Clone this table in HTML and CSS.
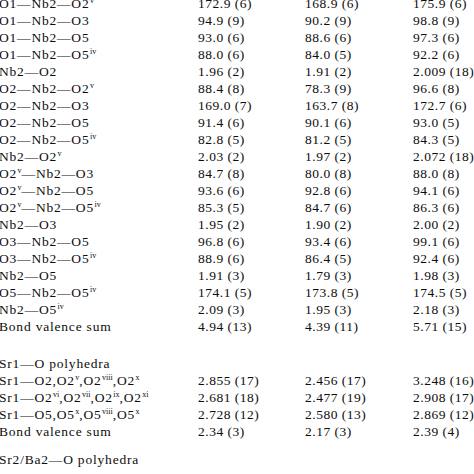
FILE: index.html
```html
<!DOCTYPE html>
<html>
<head>
<meta charset="utf-8">
<link rel="stylesheet" href="styles.css">
</head>
<body>
<div class="table">
  <div class="row"><span>O1—Nb2—O2<sup>v</sup></span><span>172.9 (6)</span><span>168.9 (6)</span><span>175.9 (6)</span></div>
  <div class="row"><span>O1—Nb2—O3</span><span>94.9 (9)</span><span>90.2 (9)</span><span>98.8 (9)</span></div>
  <div class="row"><span>O1—Nb2—O5</span><span>93.0 (6)</span><span>88.6 (6)</span><span>97.3 (6)</span></div>
  <div class="row"><span>O1—Nb2—O5<sup>iv</sup></span><span>88.0 (6)</span><span>84.0 (5)</span><span>92.2 (6)</span></div>
  <div class="row"><span>Nb2—O2</span><span>1.96 (2)</span><span>1.91 (2)</span><span>2.009 (18)</span></div>
  <div class="row"><span>O2—Nb2—O2<sup>v</sup></span><span>88.4 (8)</span><span>78.3 (9)</span><span>96.6 (8)</span></div>
  <div class="row"><span>O2—Nb2—O3</span><span>169.0 (7)</span><span>163.7 (8)</span><span>172.7 (6)</span></div>
  <div class="row"><span>O2—Nb2—O5</span><span>91.4 (6)</span><span>90.1 (6)</span><span>93.0 (5)</span></div>
  <div class="row"><span>O2—Nb2—O5<sup>iv</sup></span><span>82.8 (5)</span><span>81.2 (5)</span><span>84.3 (5)</span></div>
  <div class="row"><span>Nb2—O2<sup>v</sup></span><span>2.03 (2)</span><span>1.97 (2)</span><span>2.072 (18)</span></div>
  <div class="row"><span>O2<sup>v</sup>—Nb2—O3</span><span>84.7 (8)</span><span>80.0 (8)</span><span>88.0 (8)</span></div>
  <div class="row"><span>O2<sup>v</sup>—Nb2—O5</span><span>93.6 (6)</span><span>92.8 (6)</span><span>94.1 (6)</span></div>
  <div class="row"><span>O2<sup>v</sup>—Nb2—O5<sup>iv</sup></span><span>85.3 (5)</span><span>84.7 (6)</span><span>86.3 (6)</span></div>
  <div class="row"><span>Nb2—O3</span><span>1.95 (2)</span><span>1.90 (2)</span><span>2.00 (2)</span></div>
  <div class="row"><span>O3—Nb2—O5</span><span>96.8 (6)</span><span>93.4 (6)</span><span>99.1 (6)</span></div>
  <div class="row"><span>O3—Nb2—O5<sup>iv</sup></span><span>88.9 (6)</span><span>86.4 (5)</span><span>92.4 (6)</span></div>
  <div class="row"><span>Nb2—O5</span><span>1.91 (3)</span><span>1.79 (3)</span><span>1.98 (3)</span></div>
  <div class="row"><span>O5—Nb2—O5<sup>iv</sup></span><span>174.1 (5)</span><span>173.8 (5)</span><span>174.5 (5)</span></div>
  <div class="row"><span>Nb2—O5<sup>iv</sup></span><span>2.09 (3)</span><span>1.95 (3)</span><span>2.18 (3)</span></div>
  <div class="row"><span>Bond valence sum</span><span>4.94 (13)</span><span>4.39 (11)</span><span>5.71 (15)</span></div>
  <div class="gap gap1"></div>
  <div class="row"><span>Sr1—O polyhedra</span><span></span><span></span><span></span></div>
  <div class="row"><span>Sr1—O2,O2<sup>v</sup>,O2<sup>viii</sup>,O2<sup>x</sup></span><span>2.855 (17)</span><span>2.456 (17)</span><span>3.248 (16)</span></div>
  <div class="row"><span>Sr1—O2<sup>vi</sup>,O2<sup>vii</sup>,O2<sup>ix</sup>,O2<sup>xi</sup></span><span>2.681 (18)</span><span>2.477 (19)</span><span>2.908 (17)</span></div>
  <div class="row"><span>Sr1—O5,O5<sup>x</sup>,O5<sup>viii</sup>,O5<sup>x</sup></span><span>2.728 (12)</span><span>2.580 (13)</span><span>2.869 (12)</span></div>
  <div class="row"><span>Bond valence sum</span><span>2.34 (3)</span><span>2.17 (3)</span><span>2.39 (4)</span></div>
  <div class="gap gap2"></div>
  <div class="row"><span>Sr2/Ba2—O polyhedra</span><span></span><span></span><span></span></div>
</div>
</body>
</html>
```
FILE: styles.css
```css
html, body {
  margin: 0;
  padding: 0;
  background: #ffffff;
  overflow: hidden;
}
body {
  width: 474px;
  height: 474px;
  font-family: "Liberation Serif", "Times New Roman", serif;
  font-size: 13.5px;
  color: #0d0d0d;
}
.table {
  margin-top: -5px;
  margin-left: -1px;
}
.row {
  display: grid;
  grid-template-columns: 199px 107px 108px 80px;
  height: 17px;
  line-height: 17px;
  white-space: nowrap;
}
.row span {
  letter-spacing: 0.5px;
}
.row span:first-child {
  letter-spacing: 0.8px;
}
sup {
  font-size: 8px;
  line-height: 0;
  vertical-align: 5px;
  letter-spacing: 0;
  margin-left: 0.5px;
}
.gap1 {
  height: 20px;
}
.gap2 {
  height: 11px;
}
```
